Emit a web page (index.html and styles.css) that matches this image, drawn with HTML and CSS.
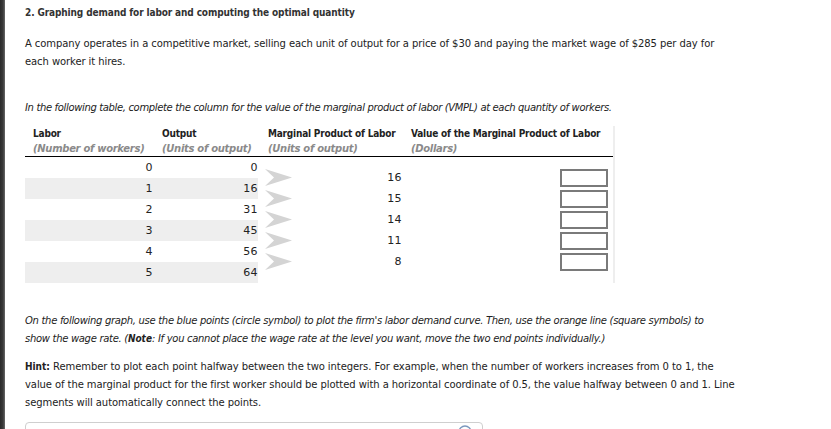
FILE: index.html
```html
<!DOCTYPE html>
<html>
<head>
<meta charset="utf-8">
<link rel="stylesheet" href="styles.css">
</head>
<body>
<div class="page">
  <div class="sidebar"></div>
  <main class="content">
    <h2 class="title">2. Graphing demand for labor and computing the optimal quantity</h2>
    <p class="intro">A company operates in a competitive market, selling each unit of output for a price of $30 and paying the market wage of $285 per day for each worker it hires.</p>
    <p class="instr">In the following table, complete the column for the value of the marginal product of labor (VMPL) at each quantity of workers.</p>

    <div class="table">
      <div class="thead">
        <div class="th c1"><b>Labor</b><i>(Number of workers)</i></div>
        <div class="th c2"><b>Output</b><i>(Units of output)</i></div>
        <div class="th c3"><b>Marginal Product of Labor</b><i>(Units of output)</i></div>
        <div class="th c4"><b>Value of the Marginal Product of Labor</b><i>(Dollars)</i></div>
      </div>
      <div class="tbody">
        <div class="rows">
          <div class="row"><span class="n1">0</span><span class="n2">0</span></div>
          <div class="row"><span class="n1">1</span><span class="n2">16</span></div>
          <div class="row"><span class="n1">2</span><span class="n2">31</span></div>
          <div class="row"><span class="n1">3</span><span class="n2">45</span></div>
          <div class="row"><span class="n1">4</span><span class="n2">56</span></div>
          <div class="row"><span class="n1">5</span><span class="n2">64</span></div>
        </div>
        <div class="mpl">
          <div class="mrow"><svg class="chev" viewBox="0 0 27 17"><polygon points="0,0 27,8.5 0,17 9,8.5"/></svg><span class="mval">16</span></div>
          <div class="mrow"><svg class="chev" viewBox="0 0 27 17"><polygon points="0,0 27,8.5 0,17 9,8.5"/></svg><span class="mval">15</span></div>
          <div class="mrow"><svg class="chev" viewBox="0 0 27 17"><polygon points="0,0 27,8.5 0,17 9,8.5"/></svg><span class="mval">14</span></div>
          <div class="mrow"><svg class="chev" viewBox="0 0 27 17"><polygon points="0,0 27,8.5 0,17 9,8.5"/></svg><span class="mval">11</span></div>
          <div class="mrow"><svg class="chev" viewBox="0 0 27 17"><polygon points="0,0 27,8.5 0,17 9,8.5"/></svg><span class="mval">8</span></div>
        </div>
        <div class="vmpl">
          <div class="vrow"><input class="box" type="text"></div>
          <div class="vrow"><input class="box" type="text"></div>
          <div class="vrow"><input class="box" type="text"></div>
          <div class="vrow"><input class="box" type="text"></div>
          <div class="vrow"><input class="box" type="text"></div>
        </div>
      </div>
    </div>

    <p class="graph-instr">On the following graph, use the blue points (circle symbol) to plot the firm's labor demand curve. Then, use the orange line (square symbols) to show the wage rate. (<b>Note</b>: If you cannot place the wage rate at the level you want, move the two end points individually.)</p>
    <p class="hint"><b>Hint:</b> Remember to plot each point halfway between the two integers. For example, when the number of workers increases from 0 to 1, the value of the marginal product for the first worker should be plotted with a horizontal coordinate of 0.5, the value halfway between 0 and 1. Line segments will automatically connect the points.</p>

    <div class="graph-box">
      <svg class="help" viewBox="0 0 14 14"><circle cx="7" cy="7" r="6"/></svg>
    </div>
  </main>
</div>
</body>
</html>
```

FILE: styles.css
```css
html, body {
  margin: 0;
  padding: 0;
  background: #fff;
}
body {
  font-family: "DejaVu Sans", Verdana, sans-serif;
  font-size: 10px;
  color: #222;
  overflow: hidden;
  height: 429px;
}
.page {
  display: flex;
  height: 429px;
  overflow: hidden;
}
.sidebar {
  width: 5px;
  flex: none;
  background: linear-gradient(to right, #2a2a2a, #3a3a3a 60%, #6a6a6a);
}
.content {
  padding-left: 20px;
  width: 790px;
}
b {
  font-family: "DejaVu Sans Condensed", "DejaVu Sans", sans-serif;
  font-weight: bold;
}
.title {
  margin: 4px 0 0;
  font-family: "DejaVu Sans Condensed", "DejaVu Sans", sans-serif;
  font-size: 10px;
  line-height: 18px;
  font-weight: bold;
  color: #333;
  letter-spacing: -0.12px;
}
.intro {
  margin: 13px 0 0;
  line-height: 18px;
  width: 712px;
  letter-spacing: -0.08px;
}
.instr {
  margin: 28px 0 0;
  line-height: 18px;
  font-style: italic;
  letter-spacing: -0.35px;
}
.table {
  margin-top: 9px;
  width: 588px;
  border-right: 2px solid #eeeeee;
}
.thead {
  display: grid;
  grid-template-columns: 133px 100px 147px 208px;
  border-bottom: 1px solid #000;
}
.th {
  display: flex;
  flex-direction: column;
  line-height: 15px;
  white-space: nowrap;
}
.th b {
  color: #222;
  letter-spacing: -0.2px;
}
.th i {
  font-weight: bold;
  font-style: italic;
  color: #8a8a8a;
  letter-spacing: -0.3px;
}
.c1 { padding-left: 8px; }
.c2 { padding-left: 4px; }
.c3 { padding-left: 10px; }
.c4 { padding-left: 6px; }

.tbody {
  display: grid;
  grid-template-columns: 233px 147px 208px;
}
.rows .row {
  display: grid;
  grid-template-columns: 133px 100px;
  height: 21px;
  align-items: center;
  font-size: 11px;
  font-variant-numeric: tabular-nums;
  letter-spacing: 0.4px;
}
.rows .row:nth-child(even) {
  background: #eeeeee;
}
.n1 { text-align: right; padding-right: 5px; }
.n2 { text-align: right; padding-right: 0; }

.mpl {
  padding-top: 10px;
}
.mrow {
  height: 21px;
  display: flex;
  align-items: center;
  justify-content: space-between;
  padding: 0 3px 0 7px;
}
.chev {
  width: 27px;
  height: 17px;
  display: block;
}
.chev polygon {
  fill: #d4d4d4;
}
.mval {
  font-size: 11px;
  letter-spacing: 0.4px;
}
.vmpl {
  padding-top: 10px;
}
.vrow {
  height: 21px;
  display: flex;
  align-items: center;
  justify-content: flex-end;
  padding-right: 5px;
}
.box {
  box-sizing: border-box;
  width: 48px;
  height: 18px;
  border: 2px solid #7a7a7a;
  margin: 0;
  padding: 0;
  background: #fff;
}

.graph-instr {
  margin: 29px 0 0;
  line-height: 18px;
  font-style: italic;
  width: 705px;
  letter-spacing: -0.3px;
}
.graph-instr b,
.hint b {
  letter-spacing: 0;
}
.hint {
  margin: 10px 0 0;
  line-height: 18px;
  width: 712px;
  letter-spacing: -0.08px;
}
.graph-box {
  margin-top: 10px;
  width: 446px;
  height: 20px;
  border: 1px solid #cfcfcf;
  border-radius: 4px;
  display: flex;
  justify-content: flex-end;
  padding-right: 10px;
  box-sizing: content-box;
}
.help {
  width: 14px;
  height: 14px;
  margin-top: 2px;
}
.help circle {
  fill: none;
  stroke: #7b98bd;
  stroke-width: 1.3;
}
```
